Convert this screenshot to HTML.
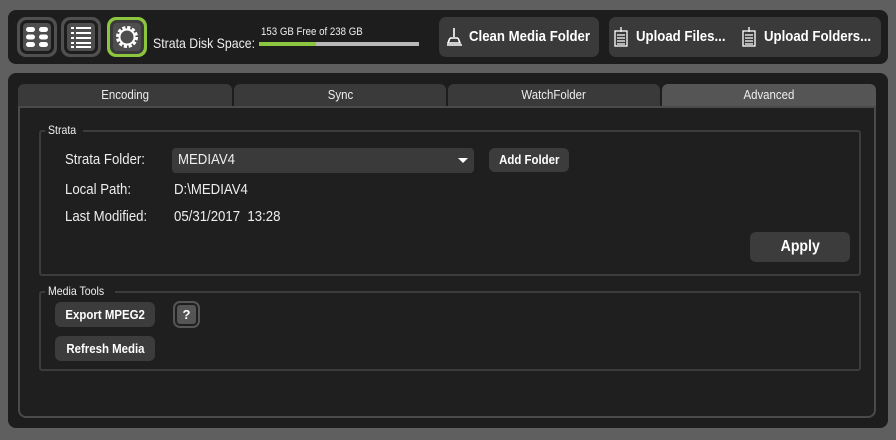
<!DOCTYPE html>
<html><head><style>
*{margin:0;padding:0;box-sizing:border-box}
body{width:896px;height:440px;background:#5f5f5f;position:relative;overflow:hidden;font-family:"Liberation Sans",sans-serif;color:#eee;white-space:nowrap}
.abs{position:absolute}
.n{display:inline-block;transform:scaleX(.88);transform-origin:left center}
.c .n{transform-origin:center center}
.bar{left:8px;top:10px;width:880px;height:54px;background:#1d1d1d;border-radius:8px}
.ib{width:40px;height:40px;top:17px;border-radius:9px;background:#505050;padding:3px}
.ib>div{width:100%;height:100%;background:#1d1d1d;border-radius:7px;padding:3px}
.ib>div>div{width:100%;height:100%;background:#4e4e4e;border-radius:4px;position:relative}
.btn{background:#3a3a3a;border-radius:7px;font-weight:bold;color:#fff;font-size:15px}
.panel{left:8px;top:73px;width:880px;height:355px;background:#1d1d1d;border-radius:8px}
.inner{left:18px;top:105px;width:858px;height:313px;border:2px solid #4a4a4a;border-top:none;border-radius:0 0 8px 8px;background:#1f1f1f}
.tab{top:84px;height:22px;background:#3a3a3a;border-radius:6px 6px 0 0;font-size:13px;text-align:center;line-height:22px;color:#eee}
.grp{border:2px solid #3c3c3c;border-radius:3px}
.lg{font-size:12px;background:#1f1f1f;padding:0 3px;color:#eee}
.lbl{font-size:15px;color:#eee}
.sb{background:#3c3c3c;border-radius:6px;font-weight:bold;font-size:13px;color:#fff;text-align:center}
</style></head><body>
<div class="abs bar"></div>
<div class="abs ib" style="left:17px"><div><div>
<svg width="28" height="28" viewBox="0 0 28 28" style="position:absolute;left:0;top:0"><g fill="#fff"><rect x="3" y="4" width="9" height="5" rx="2.5"/><rect x="16" y="4" width="9" height="5" rx="2.5"/><rect x="3" y="11.5" width="9" height="5" rx="2.5"/><rect x="16" y="11.5" width="9" height="5" rx="2.5"/><rect x="3" y="19" width="9" height="5" rx="2.5"/><rect x="16" y="19" width="9" height="5" rx="2.5"/></g></svg></div></div></div>
<div class="abs ib" style="left:61px"><div><div>
<svg width="28" height="28" viewBox="0 0 28 28" style="position:absolute;left:0;top:0"><g fill="#fff"><rect x="4" y="4" width="3" height="2"/><rect x="9" y="4" width="15" height="2"/><rect x="4" y="9" width="3" height="2"/><rect x="9" y="9" width="15" height="2"/><rect x="4" y="14" width="3" height="2"/><rect x="9" y="14" width="15" height="2"/><rect x="4" y="19" width="3" height="2"/><rect x="9" y="19" width="15" height="2"/><rect x="4" y="23" width="3" height="2"/><rect x="9" y="23" width="15" height="2"/></g></svg></div></div></div>
<div class="abs ib" style="left:107px;background:#8cc63e"><div style="background:#3a3a3a"><div>
<svg width="28" height="28" viewBox="0 0 28 28" style="position:absolute;left:0;top:0"><circle cx="14" cy="14" r="9" fill="none" stroke="#fff" stroke-width="4" stroke-dasharray="3 1.7"/><circle cx="14" cy="14" r="7.5" fill="none" stroke="#fff" stroke-width="2"/><circle cx="14" cy="14" r="3" fill="#4e4e4e"/></svg></div></div></div>
<div class="abs" style="left:153px;top:35px;font-size:14px"><span class="n">Strata Disk Space:</span></div>
<div class="abs" style="left:261px;top:26px;font-size:11px"><span class="n">153 GB Free of 238 GB</span></div>
<div class="abs" style="left:259px;top:42px;width:160px;height:4px;background:#b8b8b8"><div style="width:57px;height:4px;background:#8cc63e"></div></div>
<div class="abs btn" style="left:439px;top:17px;width:160px;height:40px">
<svg class="abs" style="left:6px;top:10px" width="20" height="20" viewBox="0 0 20 20"><path d="M9 1v9M5 11h8M5 11l-2 5h12l-2-5M2 18h15" stroke="#fff" stroke-width="1.6" fill="none"/></svg>
<span class="abs" style="left:30px;top:11px"><span class="n">Clean Media Folder</span></span></div>
<div class="abs btn" style="left:609px;top:17px;width:272px;height:40px">
<svg class="abs" style="left:4px;top:9px" width="16" height="22" viewBox="0 0 16 22"><rect x="2" y="5" width="12" height="15" fill="none" stroke="#fff" stroke-width="1.3"/><path d="M8 1v5M4 9h8M4 12h8M4 15h8M4 18h8" stroke="#fff" stroke-width="1.3"/></svg>
<span class="abs" style="left:27px;top:11px"><span class="n">Upload Files...</span></span>
<svg class="abs" style="left:132px;top:9px" width="16" height="22" viewBox="0 0 16 22"><rect x="2" y="5" width="12" height="15" fill="none" stroke="#fff" stroke-width="1.3"/><path d="M8 1v5M4 9h8M4 12h8M4 15h8M4 18h8" stroke="#fff" stroke-width="1.3"/></svg>
<span class="abs" style="left:155px;top:11px"><span class="n">Upload Folders...</span></span></div>

<div class="abs panel"></div>
<div class="abs inner"></div>
<div class="abs tab c" style="left:18px;width:214px"><span class="n">Encoding</span></div>
<div class="abs tab c" style="left:234px;width:212px"><span class="n">Sync</span></div>
<div class="abs tab c" style="left:448px;width:212px"><span class="n">WatchFolder</span></div>
<div class="abs tab c" style="left:662px;width:214px;background:#555"><span class="n">Advanced</span></div>
<div class="abs" style="left:18px;top:106px;width:858px;height:2px;background:#4a4a4a"></div>

<div class="abs grp" style="left:39px;top:130px;width:822px;height:146px"></div>
<div class="abs lg" style="left:45px;top:123px"><span class="n">Strata</span></div>
<div class="abs lbl" style="left:65px;top:151px"><span class="n">Strata Folder:</span></div>
<div class="abs" style="left:172px;top:148px;width:302px;height:25px;background:#3a3a3a;border-radius:4px"><span class="abs lbl" style="left:6px;top:3px"><span class="n">MEDIAV4</span></span>
<div class="abs" style="right:6px;top:10px;border-left:5px solid transparent;border-right:5px solid transparent;border-top:5px solid #fff"></div></div>
<div class="abs sb c" style="left:489px;top:148px;width:80px;height:24px;line-height:24px"><span class="n">Add Folder</span></div>
<div class="abs lbl" style="left:65px;top:181px"><span class="n">Local Path:</span></div>
<div class="abs lbl" style="left:174px;top:181px"><span class="n">D:\MEDIAV4</span></div>
<div class="abs lbl" style="left:65px;top:208px"><span class="n">Last Modified:</span></div>
<div class="abs lbl" style="left:174px;top:208px"><span class="n">05/31/2017&nbsp; 13:28</span></div>
<div class="abs sb c" style="left:750px;top:232px;width:100px;height:30px;line-height:30px;font-size:16px"><span class="n">Apply</span></div>

<div class="abs grp" style="left:39px;top:291px;width:822px;height:80px"></div>
<div class="abs lg" style="left:45px;top:284px"><span class="n">Media Tools</span></div>
<div class="abs sb c" style="left:55px;top:302px;width:100px;height:25px;line-height:25px"><span class="n">Export MPEG2</span></div>
<div class="abs" style="left:173px;top:301px;width:27px;height:27px;border:2px solid #555;border-radius:7px;padding:2px"><div style="width:100%;height:100%;background:#555;border-radius:3px;font-weight:bold;font-size:13px;text-align:center;line-height:19px;color:#fff">?</div></div>
<div class="abs sb c" style="left:55px;top:336px;width:100px;height:25px;line-height:25px"><span class="n">Refresh Media</span></div>
</body></html>
